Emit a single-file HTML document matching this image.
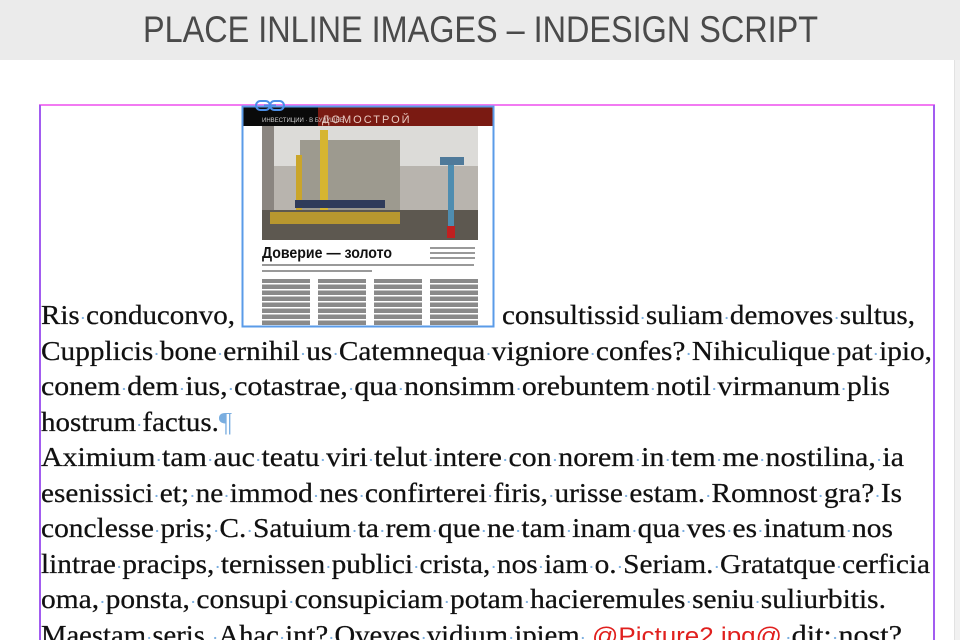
<!DOCTYPE html>
<html><head><meta charset="utf-8"><style>
html,body{margin:0;padding:0;width:960px;height:640px;overflow:hidden;background:#fff}
svg{display:block}
.t{font-family:"Liberation Serif",serif;font-size:27px;fill:#111;stroke:#111;stroke-width:0.25}
.d{fill:#7aaee0;stroke:none;font-size:18px}
</style></head><body>
<svg width="960" height="640" viewBox="0 0 960 640" xmlns="http://www.w3.org/2000/svg">
<rect x="0" y="0" width="960" height="60" fill="#ebebeb"/>
<rect x="954" y="60" width="6" height="580" fill="#f1f1f1"/>
<line x1="954.5" y1="60" x2="954.5" y2="640" stroke="#e2e2e2"/>
<text x="143" y="42" textLength="675" lengthAdjust="spacingAndGlyphs" style="font-family:'Liberation Sans Narrow','Liberation Sans',sans-serif;font-size:37px;fill:#4a4a4a">PLACE INLINE IMAGES – INDESIGN SCRIPT</text>

<line x1="39" y1="105" x2="935" y2="105" stroke="#f27af2" stroke-width="2"/>
<line x1="40" y1="105" x2="40" y2="640" stroke="#a25cf0" stroke-width="2"/>
<line x1="934" y1="105" x2="934" y2="640" stroke="#a25cf0" stroke-width="2"/>

<rect x="242" y="106" width="252" height="221" fill="#fff"/>
<rect x="242" y="106" width="76" height="20" fill="#0a0a0a"/>
<rect x="318" y="106" width="176" height="20" fill="#7a1a12"/>
<text x="262" y="122" style="font-family:'Liberation Sans',sans-serif;font-size:6px;fill:#ccc">ИНВЕСТИЦИИ · В БУДУЩЕЕ</text>
<text x="322" y="123" style="font-family:'Liberation Sans',sans-serif;font-size:11px;fill:#e9c9c0;letter-spacing:2px">ДОМОСТРОЙ</text>
<rect x="262" y="126" width="216" height="114" fill="#b8b4ae"/>
<rect x="262" y="126" width="216" height="40" fill="#dcdbd8"/>
<rect x="262" y="126" width="12" height="114" fill="#8a8580"/>
<rect x="300" y="140" width="100" height="70" fill="#9d9a8f"/>
<rect x="320" y="130" width="8" height="100" fill="#d6b530"/>
<rect x="296" y="155" width="6" height="75" fill="#caa52a"/>
<rect x="295" y="200" width="90" height="8" fill="#2f3b5a"/>
<rect x="262" y="210" width="216" height="30" fill="#5d5850"/>
<rect x="270" y="212" width="130" height="12" fill="#b8972f"/>
<rect x="448" y="160" width="6" height="70" fill="#4f8db0"/>
<rect x="440" y="157" width="24" height="8" fill="#4f7a9a"/>
<rect x="447" y="226" width="8" height="12" fill="#c02020"/>
<text x="262" y="258" style="font-family:'Liberation Sans',sans-serif;font-weight:bold;font-size:16px;fill:#111" textLength="130" lengthAdjust="spacingAndGlyphs">Доверие — золото</text>
<rect x="430" y="247" width="45" height="2" fill="#999"/><rect x="430" y="252" width="45" height="2" fill="#999"/><rect x="430" y="257" width="45" height="2" fill="#999"/>
<rect x="262" y="264" width="212" height="2" fill="#999"/><rect x="262" y="270" width="110" height="2" fill="#999"/>
<g fill="#8a8a8a">
<rect x="262" y="279" width="48" height="46"/><rect x="318" y="279" width="48" height="46"/><rect x="374" y="279" width="48" height="46"/><rect x="430" y="279" width="48" height="46"/>
</g>
<g fill="#fff">
<rect x="262" y="283" width="48" height="1.5"/><rect x="318" y="283" width="48" height="1.5"/><rect x="374" y="283" width="48" height="1.5"/><rect x="430" y="283" width="48" height="1.5"/>
<rect x="262" y="289" width="216" height="1.5"/><rect x="262" y="295" width="216" height="1.5"/><rect x="262" y="301" width="216" height="1.5"/><rect x="262" y="307" width="216" height="1.5"/><rect x="262" y="313" width="216" height="1.5"/><rect x="262" y="319" width="216" height="1.5"/>
</g>
<rect x="242.5" y="106.5" width="251" height="220" fill="none" stroke="#5a9be8" stroke-width="2"/>
<g fill="none" stroke="#4a8ee8" stroke-width="2">
<rect x="256" y="101" width="14" height="9" rx="4.5"/>
<rect x="270" y="101" width="14" height="9" rx="4.5"/>
</g>
<line x1="264" y1="105.5" x2="276" y2="105.5" stroke="#4a8ee8" stroke-width="2"/>

<text class="t" x="41" y="324" textLength="194" lengthAdjust="spacingAndGlyphs">Ris<tspan class="d">·</tspan>conduconvo,</text>
<text class="t" x="502" y="324" textLength="413" lengthAdjust="spacingAndGlyphs">consultissid<tspan class="d">·</tspan>suliam<tspan class="d">·</tspan>demoves<tspan class="d">·</tspan>sultus,</text>
<text class="t" x="41" y="360" textLength="891" lengthAdjust="spacingAndGlyphs">Cupplicis<tspan class="d">·</tspan>bone<tspan class="d">·</tspan>ernihil<tspan class="d">·</tspan>us<tspan class="d">·</tspan>Catemnequa<tspan class="d">·</tspan>vigniore<tspan class="d">·</tspan>confes?<tspan class="d">·</tspan>Nihiculique<tspan class="d">·</tspan>pat<tspan class="d">·</tspan>ipio,</text>
<text class="t" x="41" y="395" textLength="849" lengthAdjust="spacingAndGlyphs">conem<tspan class="d">·</tspan>dem<tspan class="d">·</tspan>ius,<tspan class="d">·</tspan>cotastrae,<tspan class="d">·</tspan>qua<tspan class="d">·</tspan>nonsimm<tspan class="d">·</tspan>orebuntem<tspan class="d">·</tspan>notil<tspan class="d">·</tspan>virmanum<tspan class="d">·</tspan>plis</text>
<text class="t" x="41" y="431" textLength="191" lengthAdjust="spacingAndGlyphs">hostrum<tspan class="d">·</tspan>factus.<tspan class="d" style="font-size:27px">¶</tspan></text>
<text class="t" x="41" y="466" textLength="863" lengthAdjust="spacingAndGlyphs">Aximium<tspan class="d">·</tspan>tam<tspan class="d">·</tspan>auc<tspan class="d">·</tspan>teatu<tspan class="d">·</tspan>viri<tspan class="d">·</tspan>telut<tspan class="d">·</tspan>intere<tspan class="d">·</tspan>con<tspan class="d">·</tspan>norem<tspan class="d">·</tspan>in<tspan class="d">·</tspan>tem<tspan class="d">·</tspan>me<tspan class="d">·</tspan>nostilina,<tspan class="d">·</tspan>ia</text>
<text class="t" x="41" y="502" textLength="861" lengthAdjust="spacingAndGlyphs">esenissici<tspan class="d">·</tspan>et;<tspan class="d">·</tspan>ne<tspan class="d">·</tspan>immod<tspan class="d">·</tspan>nes<tspan class="d">·</tspan>confirterei<tspan class="d">·</tspan>firis,<tspan class="d">·</tspan>urisse<tspan class="d">·</tspan>estam.<tspan class="d">·</tspan>Romnost<tspan class="d">·</tspan>gra?<tspan class="d">·</tspan>Is</text>
<text class="t" x="41" y="537" textLength="852" lengthAdjust="spacingAndGlyphs">conclesse<tspan class="d">·</tspan>pris;<tspan class="d">·</tspan>C.<tspan class="d">·</tspan>Satuium<tspan class="d">·</tspan>ta<tspan class="d">·</tspan>rem<tspan class="d">·</tspan>que<tspan class="d">·</tspan>ne<tspan class="d">·</tspan>tam<tspan class="d">·</tspan>inam<tspan class="d">·</tspan>qua<tspan class="d">·</tspan>ves<tspan class="d">·</tspan>es<tspan class="d">·</tspan>inatum<tspan class="d">·</tspan>nos</text>
<text class="t" x="41" y="573" textLength="889" lengthAdjust="spacingAndGlyphs">lintrae<tspan class="d">·</tspan>pracips,<tspan class="d">·</tspan>ternissen<tspan class="d">·</tspan>publici<tspan class="d">·</tspan>crista,<tspan class="d">·</tspan>nos<tspan class="d">·</tspan>iam<tspan class="d">·</tspan>o.<tspan class="d">·</tspan>Seriam.<tspan class="d">·</tspan>Gratatque<tspan class="d">·</tspan>cerficia</text>
<text class="t" x="41" y="608" textLength="845" lengthAdjust="spacingAndGlyphs">oma,<tspan class="d">·</tspan>ponsta,<tspan class="d">·</tspan>consupi<tspan class="d">·</tspan>consupiciam<tspan class="d">·</tspan>potam<tspan class="d">·</tspan>hacieremules<tspan class="d">·</tspan>seniu<tspan class="d">·</tspan>suliurbitis.</text>
<text class="t" x="41" y="644" textLength="545" lengthAdjust="spacingAndGlyphs">Maestam<tspan class="d">·</tspan>seris.<tspan class="d">·</tspan>Ahac<tspan class="d">·</tspan>int?<tspan class="d">·</tspan>Oveyes<tspan class="d">·</tspan>vidium<tspan class="d">·</tspan>ipiem<tspan class="d">·</tspan></text>
<text x="592" y="644" textLength="190" lengthAdjust="spacingAndGlyphs" style="font-family:'Liberation Sans',sans-serif;font-size:24px;fill:#e0201e">@Picture2.jpg@</text>
<text class="t" x="785" y="644" textLength="117" lengthAdjust="spacingAndGlyphs"><tspan class="d">·</tspan>dit;<tspan class="d">·</tspan>nost?</text>
</svg>
</body></html>
